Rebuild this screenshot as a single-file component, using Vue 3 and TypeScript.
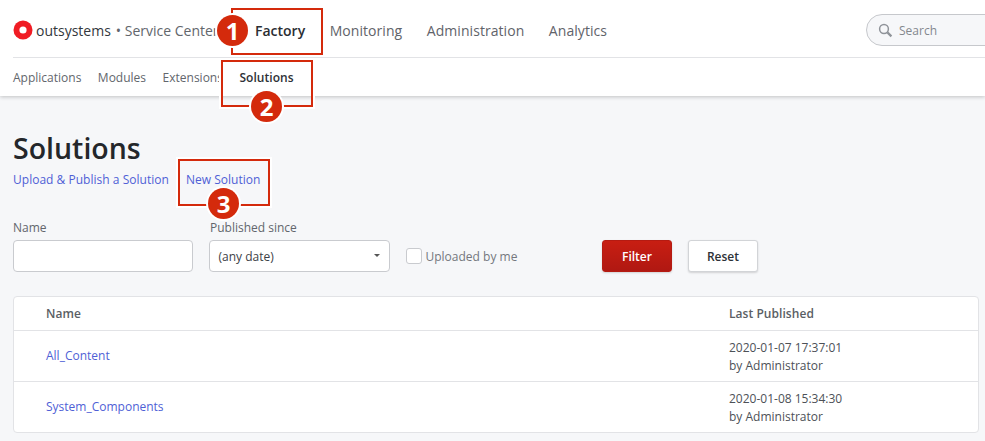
<script setup lang="ts">
interface Row { name: string; date: string; by: string }
const mainNav: string[] = ['Factory', 'Monitoring', 'Administration', 'Analytics']
const subNav: string[] = ['Applications', 'Modules', 'Extensions', 'Solutions']
const rows: Row[] = [
  { name: 'All_Content', date: '2020-01-07 17:37:01', by: 'by Administrator' },
  { name: 'System_Components', date: '2020-01-08 15:34:30', by: 'by Administrator' },
]
const marks = [
  { id: 1, cls: 'm1' },
  { id: 2, cls: 'm2' },
  { id: 3, cls: 'm3' },
]
</script>

<template>
  <div class="page">
    <header class="header">
      <div class="top">
        <div class="brand">
          <svg class="logo" width="20" height="20" viewBox="0 0 20 20">
            <circle cx="10" cy="10" r="9.5" fill="#f01c24" />
            <circle cx="10" cy="10" r="3.6" fill="#fff" />
          </svg>
          <span class="os">outsystems</span>
          <span class="sc">• Service Center</span>
        </div>
        <nav class="main-nav">
          <a v-for="(n, i) in mainNav" :key="n" :class="{ active: i === 0 }">{{ n }}</a>
        </nav>
        <div class="search">
          <svg width="15" height="15" viewBox="0 0 15 15" fill="none" stroke="#8f9399">
            <circle cx="6" cy="6" r="4.4" stroke-width="1.5" />
            <path d="M9.4 9.4 L13.4 13.4" stroke-width="2.2" />
          </svg>
          <span>Search</span>
        </div>
      </div>
      <nav class="sub-nav">
        <a v-for="(n, i) in subNav" :key="n" :class="{ active: i === 3 }">{{ n }}</a>
      </nav>
    </header>

    <main class="content">
      <h1>Solutions</h1>
      <div class="actions">
        <a>Upload &amp; Publish a Solution</a>
        <a>New Solution</a>
      </div>
      <form class="filters" @submit.prevent>
        <label class="field name">
          <span>Name</span>
          <div class="input"></div>
        </label>
        <label class="field since">
          <span>Published since</span>
          <div class="input select">(any date)<i class="caret"></i></div>
        </label>
        <div class="check"><i class="box"></i><span>Uploaded by me</span></div>
        <button class="btn primary">Filter</button>
        <button class="btn">Reset</button>
      </form>
      <section class="table">
        <div class="row head">
          <div>Name</div>
          <div>Last Published</div>
        </div>
        <div v-for="r in rows" :key="r.name" class="row">
          <a>{{ r.name }}</a>
          <div class="pub">{{ r.date }}<br />{{ r.by }}</div>
        </div>
      </section>
    </main>

    <div v-for="m in marks" :key="m.id" class="callout" :class="m.cls">
      <b>{{ m.id }}</b>
    </div>
  </div>
</template>

<style>
html, body { margin: 0; overflow: hidden; background: #f6f7f9; }
</style>

<style scoped>
.page {
  position: relative;
  width: 985px;
  height: 441px;
  overflow: hidden;
  background: #f6f7f9;
  font-family: "Open Sans", sans-serif;
  font-size: 12px;
  color: #2d3136;
}
.header {
  height: 96px;
  padding: 0 0 0 13px;
  background: #fff;
  box-shadow: 0 1px 4px rgba(0, 0, 0, 0.22);
  box-sizing: border-box;
}
.top {
  display: flex;
  align-items: center;
  height: 58px;
  padding-top: 4px;
  border-bottom: 1px solid #e2e3e6;
  box-sizing: border-box;
}
.brand {
  display: flex;
  align-items: center;
  width: 242px;
  flex: none;
  white-space: nowrap;
  overflow: hidden;
  margin-top: -1px;
}
.logo { flex: none; margin-right: 3px; }
.os { font-size: 14px; color: #33373c; }
.sc { font-size: 14px; color: #62666c; margin-left: 5px; }
.main-nav { display: flex; gap: 24.5px; flex: none; width: 611px; }
.main-nav a { font-size: 14px; letter-spacing: 0.06px; color: #5f636a; }
.main-nav a.active { color: #2a2e33; font-weight: 600; letter-spacing: 0; }
.search {
  display: flex;
  align-items: center;
  gap: 6px;
  width: 160px;
  height: 32px;
  margin-top: -1px;
  padding-left: 11px;
  border: 1px solid #c6c8cc;
  border-radius: 16px;
  background: #f6f7f9;
  font-size: 12px;
  color: #84888e;
  box-sizing: border-box;
  flex: none;
}
.sub-nav { display: flex; gap: 16.5px; align-items: center; height: 38px; }
.sub-nav a { color: #62666c; font-size: 12px; }
.sub-nav a.active { color: #2d3136; font-weight: 600; letter-spacing: 0.05px; }
.content { padding: 32px 6px 0 13px; }
h1 {
  margin: 0;
  font-size: 28.5px;
  line-height: 40px;
  font-weight: 600;
  color: #24272b;
}
.actions { display: flex; gap: 17px; height: 24px; line-height: 24px; letter-spacing: 0.02px; }
.actions a, .row a { color: #4f5fd6; }
.filters { display: flex; align-items: flex-end; margin-top: 28px; height: 52px; }
.field { display: flex; flex-direction: column; gap: 3px; color: #62666c; }
.field span { line-height: 17px; margin-bottom: 1px; }
.since span { padding-left: 1px; }
.name { width: 180px; margin-right: 16px; }
.since { width: 181px; margin-right: 16px; }
.input {
  height: 32px;
  border: 1px solid #c9cbcf;
  border-radius: 4px;
  background: #fff;
  box-sizing: border-box;
}
.select {
  position: relative;
  padding-left: 8.5px;
  line-height: 32px;
  color: #3c4046;
}
.caret {
  position: absolute;
  right: 9px;
  top: 13px;
  border-left: 3px solid transparent;
  border-right: 3px solid transparent;
  border-top: 3px solid #555;
}
.check { display: flex; align-items: center; gap: 3.5px; height: 32px; width: 196px; color: #74787e; }
.box {
  width: 14px;
  height: 14px;
  border: 1px solid #c9cbcf;
  border-radius: 3px;
  background: #fff;
}
.btn {
  height: 32px;
  width: 70px;
  margin: 0 16px 0 0;
  padding: 0;
  border: 1px solid #d2d4d7;
  border-radius: 3px;
  background: #fff;
  box-shadow: 0 1px 2px rgba(0, 0, 0, 0.15);
  font: 600 12px "Open Sans", sans-serif;
  color: #2d3136;
}
.primary {
  border-color: #b51b12;
  background: linear-gradient(#c81e12, #b01812);
  color: #fff;
}
.table {
  margin-top: 24px;
  border: 1px solid #e2e3e6;
  border-radius: 4px;
  background: #fff;
}
.row {
  display: flex;
  align-items: center;
  height: 51px;
  padding-left: 32px;
  border-top: 1px solid #e2e3e6;
  box-sizing: border-box;
}
.row > :first-child { width: 683px; flex: none; }
.row > a { padding-bottom: 2px; }
.head { height: 33px; border-top: 0; font-weight: 600; color: #5a5e64; letter-spacing: 0.05px; }
.pub { line-height: 18px; color: #4d5157; padding-top: 1px; }
.callout {
  position: absolute;
  box-sizing: border-box;
  border: 2px solid #d42a0c;
  outline: 2px solid #fff;
}
.callout b {
  position: absolute;
  width: 31px;
  height: 31px;
  border-radius: 50%;
  background: #d42a0c;
  box-shadow: 0 0 0 2px #fff;
  color: #fff;
  font-size: 24px;
  font-weight: 700;
  line-height: 32px;
  text-align: center;
}
.m1 { left: 231px; top: 8px; width: 92px; height: 47px; }
.m1 b { left: -16px; top: 5px; }
.m2 { left: 221px; top: 60px; width: 92px; height: 47px; }
.m2 b { left: 28px; top: 29px; }
.m3 { left: 178px; top: 159px; width: 92px; height: 47px; }
.m3 b { left: 28px; top: 27px; }
</style>
